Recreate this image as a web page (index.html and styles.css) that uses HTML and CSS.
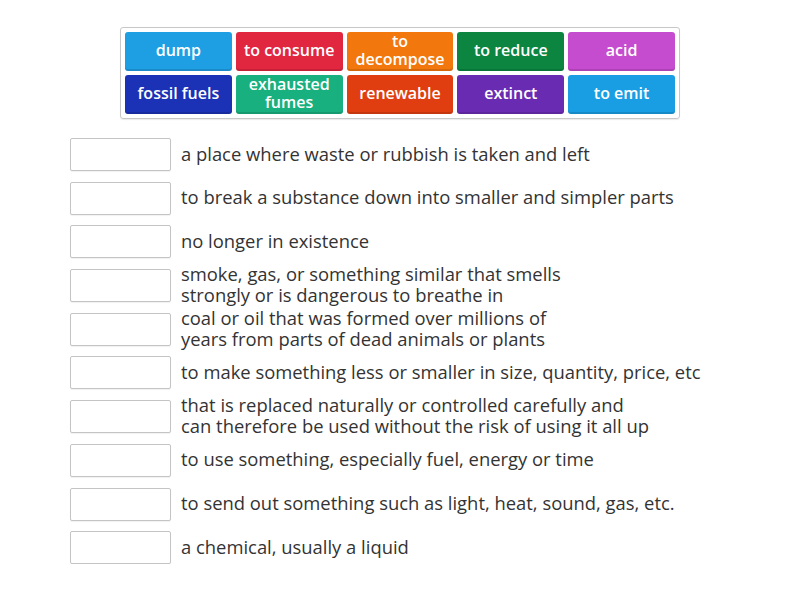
FILE: index.html
```html
<!DOCTYPE html>
<html lang="en">

<head>
    <meta charset="UTF-8">
    <title>Match up</title>
    <link rel="stylesheet" href="styles.css">
</head>

<body>
    <div class="page">
        <!-- word tiles -->
        <div class="bank">
            <div class="tile c-blue">dump</div>
            <div class="tile c-red">to consume</div>
            <div class="tile c-orange">to decompose</div>
            <div class="tile c-green">to reduce</div>
            <div class="tile c-pink">acid</div>
            <div class="tile c-navy">fossil fuels</div>
            <div class="tile c-teal">exhausted fumes</div>
            <div class="tile c-rust">renewable</div>
            <div class="tile c-purple">extinct</div>
            <div class="tile c-sky">to emit</div>
        </div>

        <!-- definitions -->
        <ul class="rows">
            <li><span class="slot"></span><p>a place where waste or rubbish is taken and left</p></li>
            <li><span class="slot"></span><p>to break a substance down into smaller and simpler parts</p></li>
            <li><span class="slot"></span><p>no longer in existence</p></li>
            <li><span class="slot"></span><p>smoke, gas, or something similar that smells<br>strongly or is dangerous to breathe in</p></li>
            <li><span class="slot"></span><p>coal or oil that was formed over millions of<br>years from parts of dead animals or plants</p></li>
            <li><span class="slot"></span><p>to make something less or smaller in size, quantity, price, etc</p></li>
            <li><span class="slot"></span><p>that is replaced naturally or controlled carefully and<br>can therefore be used without the risk of using it all up</p></li>
            <li><span class="slot"></span><p>to use something, especially fuel, energy or time</p></li>
            <li><span class="slot"></span><p>to send out something such as light, heat, sound, gas, etc.</p></li>
            <li><span class="slot"></span><p>a chemical, usually a liquid</p></li>
        </ul>
    </div>
</body>

</html>
```

FILE: styles.css
```css
* {
    margin: 0;
    padding: 0;
    box-sizing: border-box;
}

body {
    background: #fff;
    font-family: "Open Sans", "Liberation Sans", sans-serif;
    color: #333;
}

.page {
    width: 800px;
    padding-top: 27px;
}

.bank {
    width: 560px;
    margin: 0 0 0 120px;
    border: 1px solid #c8c8c8;
    border-radius: 3px;
    padding: 4px;
    display: grid;
    grid-template-columns: repeat(5, 1fr);
    gap: 4px;
    box-shadow: 0 1px 1px rgba(0, 0, 0, 0.08);
}

.tile {
    height: 39px;
    border-radius: 3px;
    color: #fff;
    font-weight: 600;
    font-size: 16px;
    line-height: 18px;
    display: flex;
    align-items: center;
    justify-content: center;
    text-align: center;
    padding: 0 6px 3px;
    box-shadow: inset 0 -2px 0 rgba(0, 0, 0, 0.12);
}

.c-blue { background: #1e9fe4; }
.c-red { background: #e1263f; }
.c-orange { background: #f2770c; }
.c-green { background: #0b8540; }
.c-pink { background: #c54ccf; }
.c-navy { background: #1b31b6; }
.c-teal { background: #17b07e; }
.c-rust { background: #e03e10; }
.c-purple { background: #6a2bb3; }
.c-sky { background: #1a9ee3; }

.rows {
    list-style: none;
    margin: 19px 0 0 70px;
    display: flex;
    flex-direction: column;
    gap: 10.7px;
}

.rows li {
    display: flex;
    align-items: center;
    height: 33px;
}

.slot {
    flex: none;
    width: 101px;
    height: 33px;
    border: 1px solid #c4c4c4;
    border-radius: 2px;
    background: #fff;
    box-shadow: 0 1px 1px rgba(0, 0, 0, 0.06);
}

.rows p {
    margin: 0 0 3px 10px;
    font-size: 18.4px;
    line-height: 21px;
    white-space: nowrap;
}
```
